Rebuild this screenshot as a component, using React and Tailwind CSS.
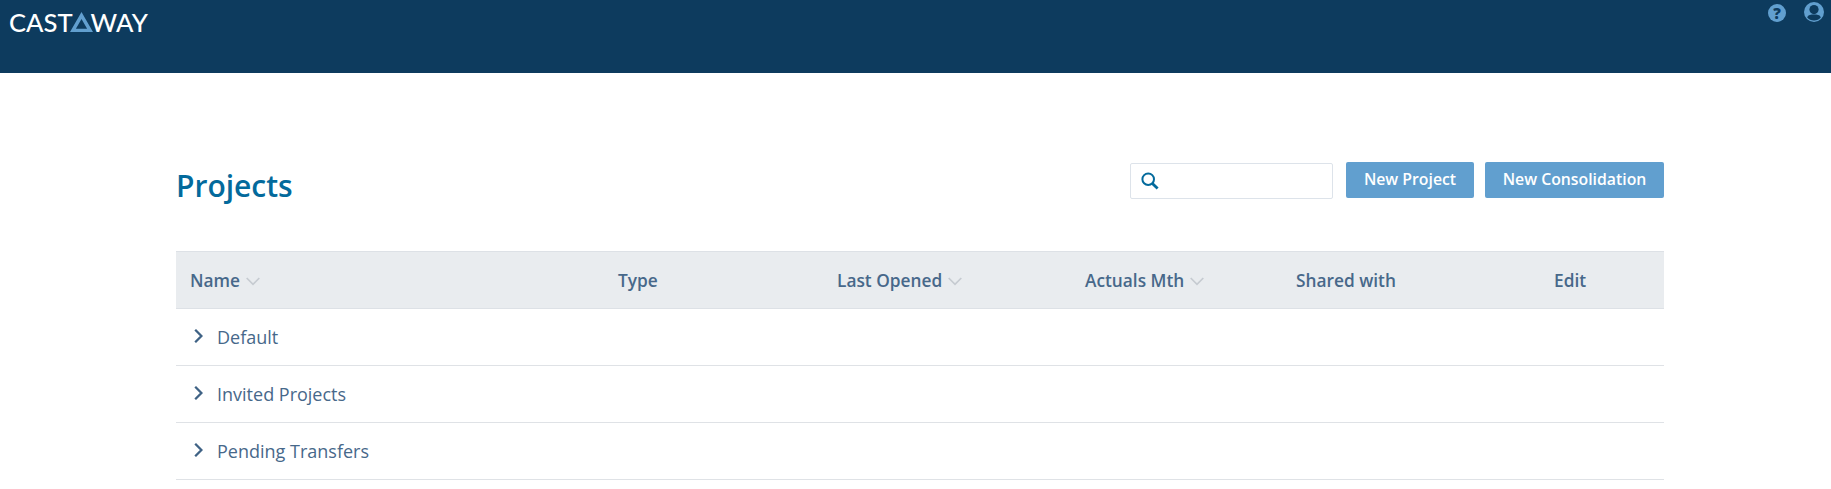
const columns = [
  { label: "Name", sortable: true },
  { label: "Type" },
  { label: "Last Opened", sortable: true },
  { label: "Actuals Mth", sortable: true },
  { label: "Shared with" },
  { label: "Edit" },
];

const groups = ["Default", "Invited Projects", "Pending Transfers"];

const Logo = () => (
  <div className="flex items-center font-['Lato',sans-serif] font-medium text-[25.6px] leading-[20px] text-white">
    <span>CAST</span>
    <svg width="23" height="20" viewBox="0 0 23 20" className="mx-[-2.5px]">
      <path d="M11.5 0 L23 20 L0 20 Z M11.5 7 L5.9 16.8 L17.1 16.8 Z" fill="#619fcf" fillRule="evenodd" />
    </svg>
    <span>WAY</span>
  </div>
);

const HelpIcon = () => (
  <svg width="18" height="18" viewBox="0 0 18 18" className="mt-[2px]">
    <circle cx="9" cy="9" r="9" fill="#619fcf" />
    <text x="9" y="14.5" textAnchor="middle" fontSize="15" fontWeight="800" fontFamily="Open Sans, sans-serif" fill="#0d3b5e">?</text>
  </svg>
);

const UserIcon = () => (
  <svg width="20" height="20" viewBox="0 0 20 20">
    <circle cx="10" cy="10" r="10" fill="#619fcf" />
    <circle cx="10" cy="7.6" r="4.6" fill="#0d3b5e" />
    <path d="M3.2 15.4 C4.2 12.8 7 12.6 10 12.6 C13 12.6 15.8 12.8 16.8 15.4 C15.2 17.4 12.8 18.4 10 18.4 C7.2 18.4 4.8 17.4 3.2 15.4 Z" fill="#0d3b5e" />
  </svg>
);

const SearchIcon = () => (
  <svg width="18" height="18" viewBox="0 0 18 18" fill="none" stroke="#036a9c">
    <circle cx="7.2" cy="7.2" r="5.8" strokeWidth="2" />
    <path d="M11.4 11.4 L16.6 16.6" strokeWidth="2.8" />
  </svg>
);

const SortChevron = () => (
  <svg width="14" height="9" viewBox="0 0 14 9" fill="none" stroke="#c6cbd1" strokeWidth="1.7" className="ml-[6px] mt-[1px]">
    <path d="M0.7 1 L7 7.4 L13.3 1" />
  </svg>
);

const RowChevron = () => (
  <svg width="9" height="14" viewBox="0 0 9 14" fill="none" stroke="#3f6285" strokeWidth="2.3" className="mr-[14px] ml-[4px] mt-[-2px]">
    <path d="M1.2 0.8 L7.4 7 L1.2 13.2" />
  </svg>
);

export default function App() {
  return (
    <div className="min-h-[489px] bg-white font-['Open_Sans',sans-serif] overflow-hidden">
      {/* Top bar */}
      <header className="h-[73px] bg-[#0d3b5e] flex items-start justify-between pl-[9px] pr-[7px]">
        <div className="pt-[12px]">
          <Logo />
        </div>
        <div className="flex items-start gap-[18px] pt-[2px]">
          <HelpIcon />
          <UserIcon />
        </div>
      </header>

      <main className="ml-[176px] w-[1488px]">
        {/* Title row */}
        <div className="flex items-start justify-between pt-[89px] h-[178px]">
          <h1 className="text-[30px] leading-[41px] font-semibold text-[#036a9c] mt-[3px]">Projects</h1>
          <div className="flex items-start">
            <div className="w-[203px] h-[36px] border border-[#dde3ea] rounded-[2px] bg-white flex items-center pl-[10px] mr-[13px] mt-[1px]">
              <SearchIcon />
            </div>
            <button className="h-[36px] w-[128px] bg-[#619fcf] rounded-[2px] text-white text-[15.8px] font-semibold mr-[11px]">
              New Project
            </button>
            <button className="h-[36px] w-[179px] bg-[#619fcf] rounded-[2px] text-white text-[15.8px] font-semibold">
              New Consolidation
            </button>
          </div>
        </div>

        {/* Table */}
        <div className="grid grid-cols-[428px_219px_248px_211px_258px_124px] h-[58px] bg-[#e9ecef] border-y border-[#dde1e6] items-center">
          {columns.map((col) => (
            <div key={col.label} className="flex items-center pl-[14px] pt-[1px] text-[17.3px] font-semibold text-[#47688a]">
              <span>{col.label}</span>
              {col.sortable && <SortChevron />}
            </div>
          ))}
        </div>
        {groups.map((name) => (
          <div key={name} className="flex items-center h-[57px] border-b border-[#dfe2e6] pl-[14px] text-[18px] text-[#47688a]">
            <RowChevron />
            <span>{name}</span>
          </div>
        ))}
      </main>
    </div>
  );
}
